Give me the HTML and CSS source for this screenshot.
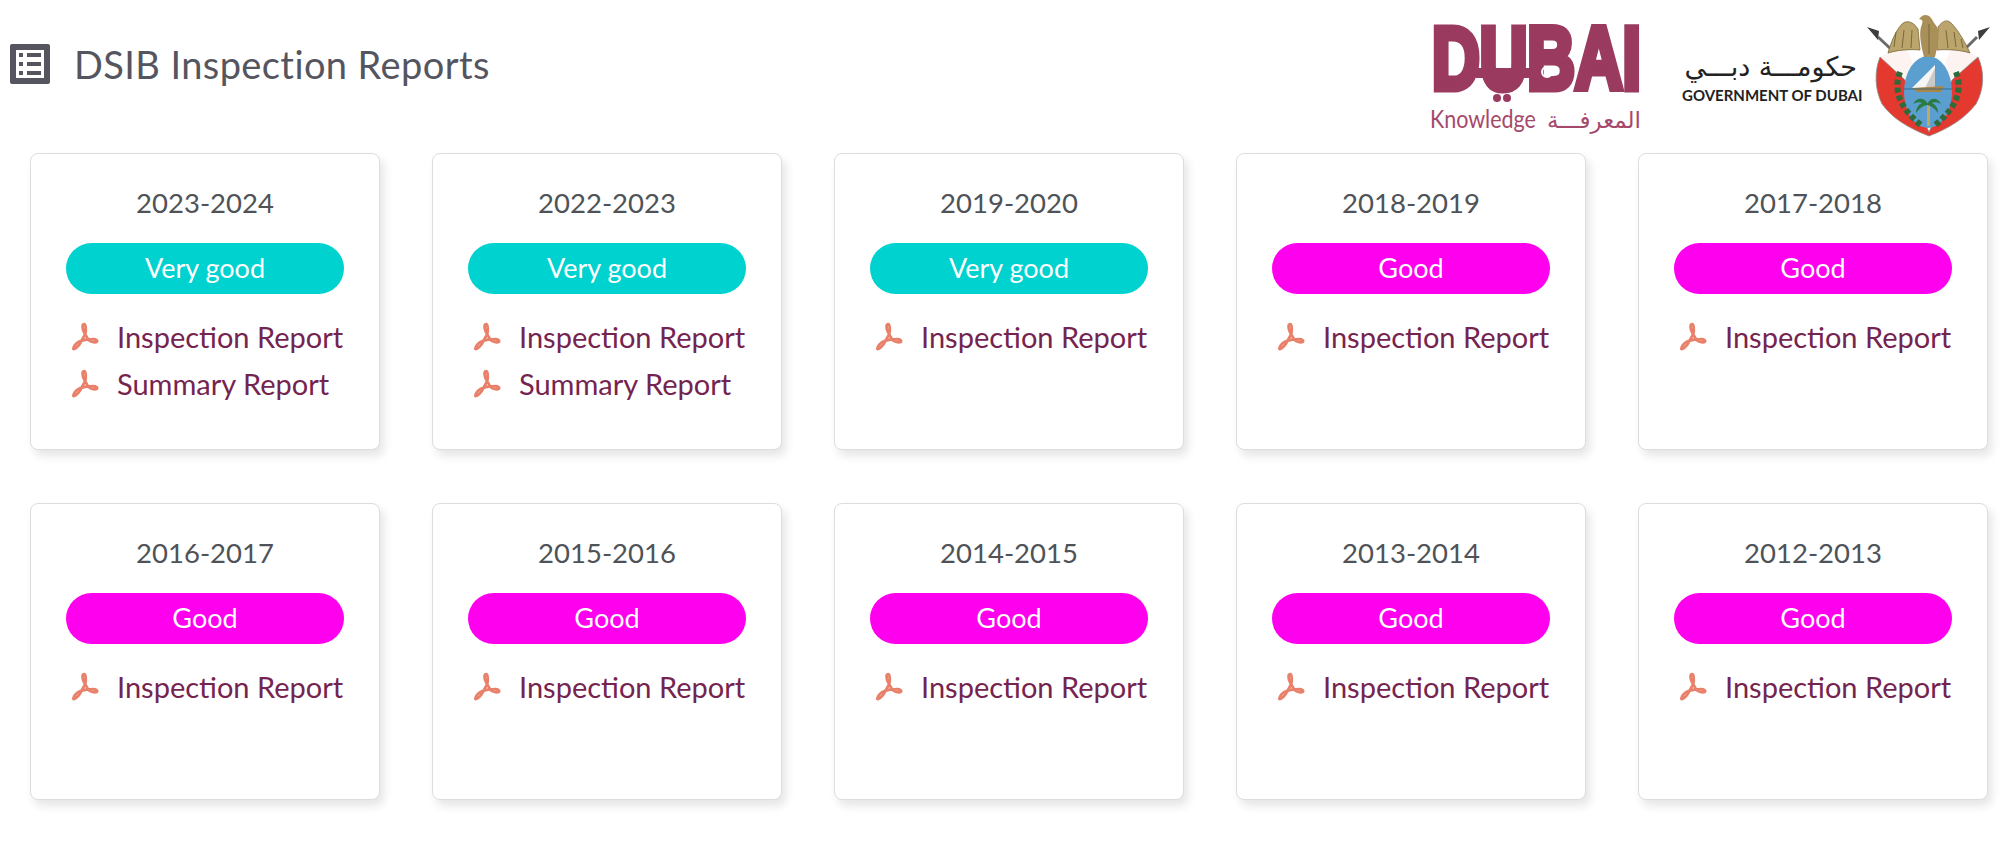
FILE: index.html
```html
<!DOCTYPE html>
<html lang="en">
<head>
<meta charset="utf-8">
<title>DSIB Inspection Reports</title>
<link rel="stylesheet" href="styles.css">
</head>
<body>
<svg class="defs" width="0" height="0" aria-hidden="true">
  <symbol id="pdf" viewBox="0 0 28 28">
    <path d="M14 2c-2 0-1.500 4.500 0 7.500l4 7c2 2 6 3 8 2 1-1-1-2.500-3-2.500-4 0-9 .5-13 2-3 1-6 5-6 7 1 1 4-1.500 6-4.500l5-9c1-3 1-9.500-1-9.500z" fill="none" stroke="#e8806a" stroke-width="2.600" stroke-linejoin="round"/>
  </symbol>
</svg>
<header class="top">
  <h1 class="title">
    <svg class="list-icon" viewBox="0 0 40 40"><rect width="40" height="40" rx="2" fill="#55555f"/><rect x="6" y="6" width="28" height="28" fill="#fff"/><path d="M9 9h4v4H9zM9 18h4v4H9zM9 27h4v4H9zM17 9h14v4H17zM17 18h14v4H17zM17 27h14v4H17z" fill="#55555f"/></svg>
    <span>DSIB Inspection Reports</span>
  </h1>
  <div class="logos">
    <svg class="logo-dubai" width="212" height="126" viewBox="0 -14 212 126">
      <text class="dubai-word" transform="translate(2 67) scale(.75 1)">DUBAI</text>
      <path d="M46 46h60v10H46z" fill="#9b3a5f"/>
      <circle cx="117" cy="50" r="5" fill="none" stroke="#fff" stroke-width="2"/>
      <circle cx="67" cy="76" r="4" fill="#9b3a5f"/><circle cx="77" cy="76" r="4" fill="#9b3a5f"/>
      <text class="know-word" transform="translate(0 106) scale(.86 1)">Knowledge</text>
      <text class="know-ar" x="211" y="106" text-anchor="end">المعرفـــة</text>
    </svg>
    <div class="gov">
      <div class="gov-ar">حكومـــة دبـــي</div>
      <div class="gov-en">GOVERNMENT OF DUBAI</div>
    </div>
    <svg class="crest" width="135" height="130" viewBox="0 0 135 130">
      <path d="M18 27l29 27" stroke="#6b6b6b" stroke-width="3" fill="none"/>
      <path d="M117 27l-27 27" stroke="#6b6b6b" stroke-width="3" fill="none"/>
      <path d="M7 17l12 4-1 9z" fill="#3d3d3d"/><path d="M130 17l-12 4 1 9z" fill="#3d3d3d"/>
      <path d="M20 47L45 34 60 70 40 70zM118 47L93 34 78 70 98 70z" fill="#fdf3f0"/>
      <path d="M20 47C14 62 15 80 22 94c10 14 26 24 47 32 21-8 36-18 47-32 8-14 9-32 2-47L92 70 69 122 45 70z" fill="#e3392f" stroke="#8f8f8f" stroke-width=".8"/>
      <ellipse cx="68" cy="82" rx="24" ry="36" fill="#5b9fd0"/>
      <path d="M75 55L52 78h23z" fill="#f5f5f5"/><path d="M75 58l-10 20h10z" fill="#c9c9c9"/>
      <path d="M52 78l32-2-3 6H57z" fill="#ab8647"/><path d="M44 79h48" stroke="#2c5f86" stroke-width=".8"/>
      <path d="M67 93h3v23h-3z" fill="#bfa765"/>
      <path d="M68 94c-4-7-11-7-15 0 4-2 7-2 9-1-4 2-6 5-6 10 3-4 6-7 11-8 5 1 8 4 11 8 0-5-2-8-6-10 2-1 5-1 9 1-4-7-10-7-14 0z" fill="#2c7a44"/>
      <path d="M40 62c-6 16-3 34 22 54M96 62c6 16 3 34-22 54" fill="none" stroke="#2f6a3a" stroke-width="6" stroke-dasharray="5 3"/>
      <path d="M58 19C53 11 46 10 42 14 36 20 31 32 28 43c9-3 22-4 32-3zM78 17c5-7 10-8 14-3 6 6 13 18 18 29-9-3-23-4-33-3z" fill="#bba56c" stroke="#7a683a" stroke-width=".8"/>
      <path d="M62 6c3-2 7-1 9 2 2 3 3 5 6 9 3 8 1 18-2 30h-11c-3-12-5-22-3-30 1-3 2-5 1-7l-3-1z" fill="#a98f58"/>
      <path d="M36 22l-2 15M44 20l-2 18M52 20l-1 18M86 20l2 18M94 22l2 15M101 29l2 9M69 14v30" stroke="#7a683a" stroke-width="1" fill="none"/>
    </svg>
  </div>
</header>
<main class="cards">
  <article class="card"><h2 class="year">2023-2024</h2><div class="pill vg">Very good</div><a class="link"><svg class="pdf"><use href="#pdf"/></svg>Inspection Report</a><a class="link"><svg class="pdf"><use href="#pdf"/></svg>Summary Report</a></article>
  <article class="card"><h2 class="year">2022-2023</h2><div class="pill vg">Very good</div><a class="link"><svg class="pdf"><use href="#pdf"/></svg>Inspection Report</a><a class="link"><svg class="pdf"><use href="#pdf"/></svg>Summary Report</a></article>
  <article class="card"><h2 class="year">2019-2020</h2><div class="pill vg">Very good</div><a class="link"><svg class="pdf"><use href="#pdf"/></svg>Inspection Report</a></article>
  <article class="card"><h2 class="year">2018-2019</h2><div class="pill good">Good</div><a class="link"><svg class="pdf"><use href="#pdf"/></svg>Inspection Report</a></article>
  <article class="card"><h2 class="year">2017-2018</h2><div class="pill good">Good</div><a class="link"><svg class="pdf"><use href="#pdf"/></svg>Inspection Report</a></article>
  <article class="card"><h2 class="year">2016-2017</h2><div class="pill good">Good</div><a class="link"><svg class="pdf"><use href="#pdf"/></svg>Inspection Report</a></article>
  <article class="card"><h2 class="year">2015-2016</h2><div class="pill good">Good</div><a class="link"><svg class="pdf"><use href="#pdf"/></svg>Inspection Report</a></article>
  <article class="card"><h2 class="year">2014-2015</h2><div class="pill good">Good</div><a class="link"><svg class="pdf"><use href="#pdf"/></svg>Inspection Report</a></article>
  <article class="card"><h2 class="year">2013-2014</h2><div class="pill good">Good</div><a class="link"><svg class="pdf"><use href="#pdf"/></svg>Inspection Report</a></article>
  <article class="card"><h2 class="year">2012-2013</h2><div class="pill good">Good</div><a class="link"><svg class="pdf"><use href="#pdf"/></svg>Inspection Report</a></article>
</main>
</body>
</html>
```
FILE: styles.css
```css
* { box-sizing: border-box; }
html, body { margin: 0; background: #fff; }
body { font-family: "Lato", "Noto Sans", sans-serif; color: #4f4f57; width: 2001px; height: 850px; overflow: hidden; }
.defs { position: absolute; }
.top { display: flex; justify-content: space-between; align-items: flex-start; height: 153px; padding: 8px 6px 0 10px; }
.title { display: flex; align-items: center; gap: 24px; margin: 36px 0 0; font-size: 38px; font-weight: 400; line-height: 40px; letter-spacing: .4px; color: #55555f; }
.list-icon { width: 40px; height: 40px; flex: none; }
.logos { display: flex; align-items: flex-start; }
.logo-dubai { flex: none; margin-right: 40px; }
.dubai-word { font-family: "Liberation Sans", sans-serif; font-weight: 700; font-size: 88px; fill: #9b3a5f; stroke: #9b3a5f; stroke-width: 7; }
.know-word { font-family: "Lato", sans-serif; font-size: 25px; fill: #a5496b; }
.know-ar { font-family: "DejaVu Sans", sans-serif; font-size: 23px; fill: #a5496b; }
.gov { flex: none; width: 175px; margin: 40px 3px 0 0; text-align: right; color: #222; }
.gov-ar { font-family: "DejaVu Sans", sans-serif; font-size: 27px; line-height: 38px; white-space: nowrap; }
.gov-en { font-family: "Lato", sans-serif; font-size: 15px; font-weight: 700; line-height: 18px; white-space: nowrap; }
.crest { flex: none; margin-top: 2px; }
.cards { display: grid; grid-template-columns: repeat(5, 350px); grid-auto-rows: 297px; column-gap: 52px; row-gap: 53px; padding-left: 30px; }
.card { display: flex; flex-direction: column; padding: 29px 35px 0; background: #fff; border: 1px solid #ddd; border-radius: 8px; box-shadow: 4px 6px 10px rgba(0,0,0,.1); }
.year { margin: 0 0 20px; font-size: 27.5px; font-weight: 400; line-height: 40px; text-align: center; color: #4f5357; }
.pill { height: 51px; margin-bottom: 19px; border-radius: 26px; color: #fff; font-size: 27px; line-height: 50px; text-align: center; }
.vg { background: #00d2cf; }
.good { background: #ff00ee; }
.link { display: flex; align-items: center; gap: 18px; height: 47px; padding-left: 3px; font-size: 29px; color: #75244f; white-space: nowrap; }
.pdf { width: 30px; height: 30px; flex: none; }
```
